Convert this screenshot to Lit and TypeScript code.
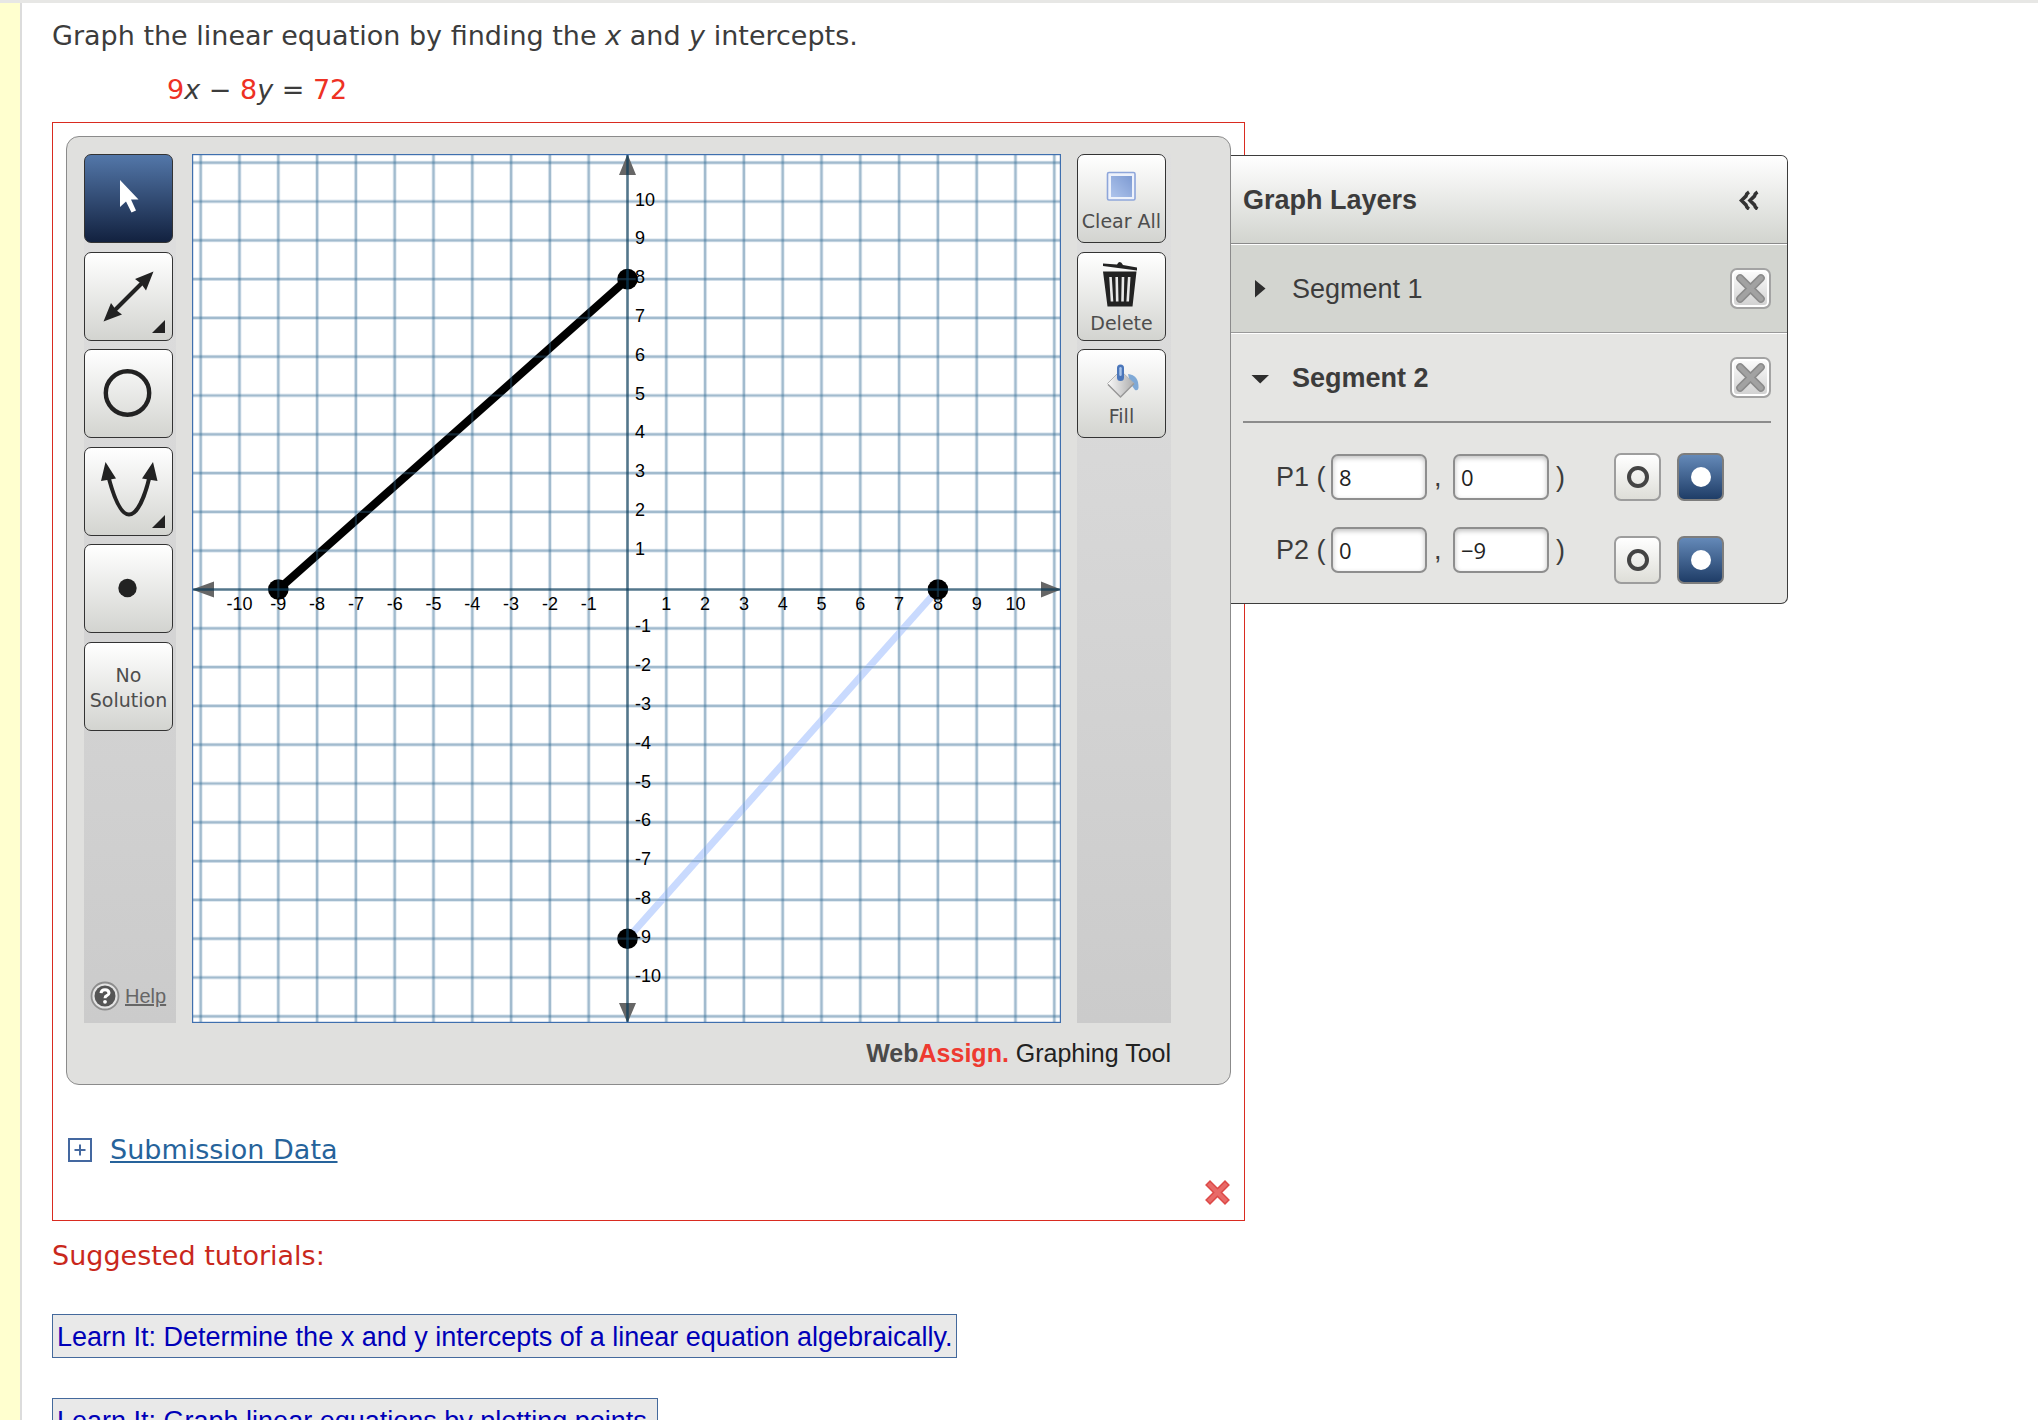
import { LitElement, html, css, svg, nothing } from "lit";
import { customElement, property, state } from "lit/decorators.js";
import { classMap } from "lit/directives/class-map.js";

type Pt = [number, number];
interface Segment {
  name: string;
  from: Pt;
  to: Pt;
  active: boolean;
}

const SIZE = 869;
const CENTER = 435.5;
const CELL = 38.8;
const px = (x: number) => CENTER + x * CELL;
const py = (y: number) => CENTER - y * CELL;
const range = (a: number, b: number) => Array.from({ length: b - a + 1 }, (_, i) => a + i);

const SEGMENTS: Segment[] = [
  { name: "Segment 1", from: [-9, 0], to: [0, 8], active: false },
  { name: "Segment 2", from: [8, 0], to: [0, -9], active: true },
];

@customElement("graph-plane")
export class GraphPlane extends LitElement {
  @property({ attribute: false }) segments: Segment[] = [];

  static styles = css`
    :host { display: block; }
    .plane { display: block; width: 100%; height: auto; background: #fff; }
    .halo { stroke: rgba(120, 160, 190, 0.22); stroke-width: 4; }
    .grid { stroke: rgba(50, 105, 145, 0.36); stroke-width: 2.2; }
    .axis { stroke: rgba(10, 60, 90, 0.7); stroke-width: 2.6; }
    .head { fill: #666; }
    .label { font: 18px "Liberation Sans", Arial, sans-serif; fill: #000; }
    .mid { text-anchor: middle; }
    .seg { stroke: #000; stroke-width: 8; }
    .seg-active { stroke: #c9dafe; stroke-width: 7; }
    .frame { fill: none; stroke: #3f6fae; stroke-width: 2.4; }
  `;

  render() {
    const ticks = range(-10, 10).filter((n) => n !== 0);
    const lines = range(-11, 11).filter((n) => n !== 0);
    const grid = (cls: string) =>
      lines.map(
        (n) => svg`<line class=${cls} x1=${px(n)} y1="0" x2=${px(n)} y2=${SIZE} /><line class=${cls} x1="0" y1=${py(n)} x2=${SIZE} y2=${py(n)} />`
      );
    return html`
      <svg class="plane" viewBox="0 0 ${SIZE} ${SIZE}" role="img" aria-label="Coordinate plane">
        ${grid("halo")}
        ${this.segments.map(
          (s) => svg`<line class=${s.active ? "seg-active" : "seg"} x1=${px(s.from[0])} y1=${py(s.from[1])} x2=${px(s.to[0])} y2=${py(s.to[1])} />`
        )}
        ${this.segments.flatMap((s) => [s.from, s.to]).map((p) => svg`<circle cx=${px(p[0])} cy=${py(p[1])} r="10.3" />`)}
        ${grid("grid")}
        <path class="head" d="M435.5 0l8.5 21h-17zM435.5 869l8.5-20h-17zM0 435.5l22-8v16zM869 435.5l-20-8v16z" />
        <line class="axis" x1=${CENTER} y1="0" x2=${CENTER} y2=${SIZE} />
        <line class="axis" x1="0" y1=${CENTER} x2=${SIZE} y2=${CENTER} />
        ${ticks.map(
          (n) => svg`<text class="label mid" x=${px(n)} y="456">${n}</text><text class="label" x="443" y=${py(n) + 4}>${n}</text>`
        )}
        <rect class="frame" width=${SIZE} height=${SIZE} />
      </svg>
    `;
  }
}

const iconCross = html`
  <svg class="cross" viewBox="0 0 27 27" aria-hidden="true">
    <path class="cross-edge" d="M5 5L22 22M22 5L5 22" />
    <path class="cross-face" d="M5 5L22 22M22 5L5 22" />
  </svg>
`;

@customElement("layer-panel")
export class LayerPanel extends LitElement {
  @property({ attribute: false }) segments: Segment[] = [];

  static styles = css`
    :host {
      display: block;
      box-sizing: border-box;
      border: 1px solid #3c3c3c;
      border-left: 0;
      border-radius: 0 7px 7px 0;
      background: #e5e5e3;
      color: #3c3c3c;
      font: 27px/32px "Liberation Sans", Arial, sans-serif;
      overflow: hidden;
    }
    button { padding: 0; font: inherit; color: inherit; border: 0; background: none; display: block; }
    .head, .row { display: flex; align-items: center; height: 87px; box-sizing: content-box; padding: 0 16px 0 12px; }
    .head { font-weight: bold; background: linear-gradient(#fff, #d2d4cf); border-bottom: 1px solid #8a8a8a; padding-right: 28px; }
    .title { flex: 1; margin: 0; font: inherit; }
    .row { border-top: 1px solid #fff; }
    .closed { background: #d3d5d0; border-bottom: 1px solid #999; }
    .open { font-weight: bold; }
    .chev { width: 20px; height: 20px; display: block; }
    .tri { width: 28px; height: 20px; display: block; fill: #2d2d2d; }
    .toggle { display: flex; align-items: center; gap: 21px; flex: 1; text-align: left; }
    .remove {
      width: 41px; height: 41px; box-sizing: border-box; border: 2px solid #a3a3a3; border-radius: 7px;
      background: linear-gradient(#fdfdfd, #d0d0d0); box-shadow: inset 0 0 0 2px #fff;
      display: grid; place-items: center;
    }
    .cross { width: 33px; height: 33px; display: block; stroke-linecap: round; fill: none; }
    .cross-edge { stroke: #8b8b8b; stroke-width: 6.4; }
    .cross-face { stroke: #a2a2a2; stroke-width: 4; }
    .body { border-top: 2px solid #8c8c8c; margin: 0 16px 0 12px; padding: 30px 47px 19px 33px; display: flex; justify-content: space-between; align-items: flex-start; }
    .coords { display: grid; gap: 27px; padding-top: 1px; }
    .coord { display: grid; grid-template-columns: 55px 96px 26px 96px auto; align-items: center; height: 46px; }
    .comma, .paren { padding-left: 7px; }
    .num {
      width: 100%; height: 46px; box-sizing: border-box; border: 2px solid #8e8e8e; border-radius: 7px; background: #fff;
      box-shadow: inset 0 2px 5px rgba(0, 0, 0, 0.25); padding: 0 6px; color: #222;
      font: 22px/30px "Open Sans", "Noto Sans", sans-serif;
    }
    .ends { display: grid; grid-template-columns: 47px 47px; column-gap: 16px; row-gap: 35px; }
    .end {
      width: 47px; height: 48px; box-sizing: border-box; border: 2px solid #9d9d9d; border-radius: 7px;
      background: linear-gradient(#fff, #deded8); display: grid; place-items: center;
    }
    .on { background: linear-gradient(#6489b8, #1f3d67); border-color: #7d7d7d; }
    .dot { width: 26px; height: 26px; display: block; }
  `;

  private input(name: string, label: string, value: number) {
    return html`<input class="num" name=${name} aria-label=${label} .value=${String(value).replace("-", "\u2212")} />`;
  }

  render() {
    return html`
      <div class="head">
        <h2 class="title">Graph Layers</h2>
        <button aria-label="Collapse layers">
          <svg class="chev" viewBox="0 0 20 20" fill="none" stroke="#333" stroke-width="3.6">
            <path d="M10 2Q7.500 3.500 7 6L2.500 10.500L7 15Q7.500 17.500 10 19M18.500 2Q16 3.500 15.500 6L11 10.500L15.500 15Q16 17.500 18.500 19" />
          </svg>
        </button>
      </div>
      ${this.segments.map(
        (s) => html`
          <div class=${classMap({ row: true, open: s.active, closed: !s.active })}>
            <button class="toggle" aria-expanded=${s.active ? "true" : "false"}>
              <svg class="tri" viewBox="0 0 28 20">
                ${s.active ? svg`<path d="M8.500 7H26L17.200 15.500Z" />` : svg`<path d="M12 1L22.500 9.500L12 18.500Z" />`}
              </svg>
              <span>${s.name}</span>
            </button>
            <button class="remove" aria-label="Remove ${s.name}">${iconCross}</button>
          </div>
          ${s.active ? this.details(s) : nothing}
        `
      )}
    `;
  }

  private details(s: Segment) {
    const pts = [s.from, s.to];
    return html`
      <div class="body">
        <div class="coords">
          ${pts.map(
            (p, i) => html`<div class="coord">
              <span>P${i + 1} (</span>
              ${this.input(`p${i + 1}x`, `P${i + 1} x`, p[0])}
              <span class="comma">,</span>
              ${this.input(`p${i + 1}y`, `P${i + 1} y`, p[1])}
              <span class="paren">)</span>
            </div>`
          )}
        </div>
        <div class="ends">
          ${pts.map(
            (_, i) => html`
              <button class="end" aria-label="P${i + 1} open" aria-pressed="false">
                <svg class="dot" viewBox="0 0 26 26"><circle cx="13" cy="13" r="9" fill="none" stroke="#444" stroke-width="4" /></svg>
              </button>
              <button class="end on" aria-label="P${i + 1} closed" aria-pressed="true">
                <svg class="dot" viewBox="0 0 26 26"><circle cx="13" cy="13" r="10" fill="#fff" /></svg>
              </button>
            `
          )}
        </div>
      </div>
    `;
  }
}

const cornerMark = svg`<path fill="#222" d="M67 80L80 67V80Z" />`;

const iconPointer = html`<svg class="full" viewBox="0 0 87 87"><path fill="#fff" d="M35 25V52L41 46.500L46.500 57.500L51 55.500L46 44.500H53.500Z" /></svg>`;
const iconLine = html`<svg class="full" viewBox="0 0 87 87">
  <path d="M25 62L62 25" stroke="#222" stroke-width="4" />
  <path fill="#222" d="M68.500 18.500L50 26L56 30.500L61 37.500ZM18.500 68.500L26 50L31 57L37 61.500Z" />${cornerMark}</svg>`;
const iconCircle = html`<svg class="full" viewBox="0 0 87 87"><circle cx="42.500" cy="43" r="21.700" fill="none" stroke="#222" stroke-width="4.400" /></svg>`;
const iconParabola = html`<svg class="full" viewBox="0 0 87 87">
  <path d="M23.500 29C29 50 36 66.500 44 66.500C52 66.500 59.500 50 64.500 29" fill="none" stroke="#222" stroke-width="4" />
  <path fill="#222" d="M20.500 14L16 33L31 30.500ZM68 14L57 30.500L72.500 33Z" />${cornerMark}</svg>`;
const iconPoint = html`<svg class="full" viewBox="0 0 87 87"><circle cx="42.500" cy="43" r="9.200" fill="#222" /></svg>`;
const iconClear = html`<svg class="glyph" viewBox="0 0 87 55">
  <defs><linearGradient id="sq" x1="0" y1="1" x2="1" y2="0"><stop offset="0" stop-color="#aec4ec" /><stop offset="1" stop-color="#7d9ad2" /></linearGradient></defs>
  <rect x="29.500" y="17.500" width="27.500" height="27.500" rx="1.500" fill="#eef2fb" stroke="#8ea6da" stroke-width="1.600" />
  <rect x="33" y="21" width="21" height="21" fill="url(#sq)" /></svg>`;
const iconTrash = html`<svg class="glyph tall" viewBox="0 0 87 59">
  <path fill="#222" d="M25 10.500L39 11.500Q42 6.500 45 12L59 14.500V17.500L25 13ZM25 18.500H58.500L54.500 53.500H29.500Z" />
  <path d="M32.500 24L34 48.500M38.700 24L39.200 48.500M45 24L44.500 48.500M51.200 24L49.700 48.500" stroke="#e8e8e8" stroke-width="2.600" /></svg>`;
const iconFill = html`<svg class="glyph" viewBox="0 0 87 55">
  <defs><linearGradient id="bk" x1="0" y1="0" x2="1" y2="0"><stop offset="0" stop-color="#fafafa" /><stop offset="1" stop-color="#adadad" /></linearGradient></defs>
  <path d="M50 24Q61 25 60.500 38Q60 41 57 40L52 33Z" fill="#7fa9d6" />
  <path d="M42.500 20.500L56 33.500L42.500 47L29.500 33.500Z" fill="url(#bk)" stroke="#b4b4b4" />
  <path d="M30 34.500L42.500 47L56 33.500" fill="none" stroke="#9a9a9a" stroke-width="1.500" />
  <rect x="39" y="14.500" width="7" height="16.500" rx="3.500" fill="#4a76ba" />
  <rect x="41.300" y="17" width="2.400" height="9" rx="1.200" fill="#a9c5ea" /></svg>`;

@customElement("app-root")
export class AppRoot extends LitElement {
  @state() private tool = "Pointer";

  static styles = css`
    :host { display: flex; height: 100vh; overflow: hidden; box-sizing: border-box; border-top: 3px solid #e7e7e5; background: #fff; color: #3c3c3c; font: 27px/32px "DejaVu Sans", Verdana, sans-serif; }
    .rail { flex: none; width: 20px; background: #ffffcf; border-right: 2px solid #dcdcdc; }
    .main { flex: 1; min-width: 0; padding: 17px 30px 0; }
    .line { margin: 0; }
    .equation { margin: 22px 0 16px 115px; }
    .num { color: #ee3124; }
    .box { box-sizing: border-box; max-width: 1193px; border: 1px solid #d92b20; padding: 13px; }
    .work { position: relative; }
    .tool { box-sizing: border-box; border: 1px solid #8b8b8b; border-radius: 13px; background: #e0e0de; padding: 17px 59px 17px 17px; }
    .stage { display: grid; grid-template-columns: 92px minmax(0, 1fr) 94px; column-gap: 16px; }
    .strip { background: linear-gradient(#dfdfdf, #cbcbcb); display: flex; flex-direction: column; justify-content: space-between; }
    .right { justify-content: flex-start; }
    .stack { display: flex; flex-direction: column; justify-content: space-between; min-height: 577px; }
    .short { min-height: 284px; }
    .btn {
      width: 89px; height: 89px; box-sizing: border-box; padding: 0; border: 1px solid #333; border-radius: 7px;
      background: linear-gradient(#fff, #d3d4d0); color: #4d4d4d; font: 19px/22px "DejaVu Sans", Verdana, sans-serif;
      display: flex; flex-direction: column; align-items: center; justify-content: flex-start; white-space: nowrap;
    }
    .selected { background: linear-gradient(#5377a9, #12213f); }
    .full { display: block; width: 87px; height: 87px; }
    .glyph { display: block; width: 87px; height: 55px; flex: none; }
    .tall { height: 59px; }
    .words { line-height: 25px; justify-content: center; padding-top: 4px; }
    .help { display: flex; align-items: center; gap: 5px; padding: 0 0 12px 6px; color: #666; font: 20px/30px "Liberation Sans", Arial, sans-serif; }
    .help-icon { width: 30px; height: 30px; display: block; }
    .help-link { color: inherit; }
    .brand { margin: 16px 0 0; text-align: right; color: #222; font: 25px/28px "Liberation Sans", Arial, sans-serif; }
    .web { color: #4a4a4a; }
    .assign { color: #ee3a30; }
    .layers { position: absolute; left: 100%; top: 19px; width: 557px; }
    .submission { display: flex; align-items: center; gap: 18px; margin: 49px 0 13px 2px; }
    .plus { width: 24px; height: 24px; display: block; }
    .link { color: #26639b; }
    .mark { width: 28px; height: 28px; display: block; margin-left: auto; stroke-linecap: square; fill: none; }
    .mark-edge { stroke: #dd4a48; stroke-width: 7; }
    .mark-face { stroke: #e86a68; stroke-width: 4; }
    .suggest { margin: 19px 0 42px; color: #c9281c; }
    .lessons { display: grid; justify-items: start; gap: 40px; }
    .lesson { border: 1px solid #44699c; background: #e9e9e9; color: #0000b8; padding: 7px 3px 4px 4px; font: 27px/31px "Liberation Sans", Arial, sans-serif; text-decoration: none; }
  `;

  private tools = [
    { name: "Pointer", icon: iconPointer },
    { name: "Line", icon: iconLine },
    { name: "Circle", icon: iconCircle },
    { name: "Parabola", icon: iconParabola },
    { name: "Point", icon: iconPoint },
  ];

  render() {
    return html`
      <div class="rail"></div>
      <main class="main">
        <p class="line">Graph the linear equation by finding the <i>x</i> and <i>y</i> intercepts.</p>
        <p class="line equation"><span class="num">9</span><i>x</i> − <span class="num">8</span><i>y</i> = <span class="num">72</span></p>
        <section class="box">
          <div class="work">
            <div class="tool">
              <div class="stage">
                <div class="strip">
                  <div class="stack">
                    ${this.tools.map(
                      (t) => html`<button
                        class=${classMap({ btn: true, selected: t.name === this.tool })}
                        aria-label=${t.name}
                        aria-pressed=${t.name === this.tool ? "true" : "false"}
                        @click=${() => (this.tool = t.name)}
                      >${t.icon}</button>`
                    )}
                    <button class="btn words">No<br />Solution</button>
                  </div>
                  <div class="help">
                    <svg class="help-icon" viewBox="0 0 30 30" aria-hidden="true">
                      <circle cx="15" cy="15" r="13.500" fill="#e4e4e4" stroke="#8d8d8d" stroke-width="1.800" />
                      <circle cx="15" cy="15" r="10.500" fill="#555" />
                      <path d="M11 12.200Q11.300 8.800 15 8.800T19 12Q19 13.600 16.800 14.700Q15 15.600 15 17.200" fill="none" stroke="#fff" stroke-width="3" />
                      <circle cx="15" cy="20.800" r="1.900" fill="#fff" />
                    </svg>
                    <a class="help-link" href="#help">Help</a>
                  </div>
                </div>
                <graph-plane .segments=${SEGMENTS}></graph-plane>
                <div class="strip right">
                  <div class="stack short">
                    <button class="btn">${iconClear}Clear All</button>
                    <button class="btn">${iconTrash}Delete</button>
                    <button class="btn">${iconFill}Fill</button>
                  </div>
                </div>
              </div>
              <p class="brand"><b class="web">Web</b><b class="assign">Assign.</b> Graphing Tool</p>
            </div>
            <layer-panel class="layers" .segments=${SEGMENTS}></layer-panel>
          </div>
          <div class="submission">
            <svg class="plus" viewBox="0 0 24 24" aria-hidden="true">
              <rect x="1" y="1" width="22" height="22" fill="#fff" stroke="#4468a0" stroke-width="2" />
              <path d="M12 6.500V17.500M6.500 12H17.500" stroke="#4468a0" stroke-width="2" />
            </svg>
            <a class="link" href="#submission">Submission Data</a>
          </div>
          <svg class="mark" viewBox="0 0 28 28" role="img" aria-label="Incorrect">
            <path class="mark-edge" d="M7 6L22 21M22 6L7 21" />
            <path class="mark-face" d="M7 6L22 21M22 6L7 21" />
          </svg>
        </section>
        <p class="suggest">Suggested tutorials:</p>
        <nav class="lessons">
          <a class="lesson" href="#intercepts">Learn It: Determine the x and y intercepts of a linear equation algebraically.</a>
          <a class="lesson" href="#plotting">Learn It: Graph linear equations by plotting points.</a>
        </nav>
      </main>
    `;
  }
}
